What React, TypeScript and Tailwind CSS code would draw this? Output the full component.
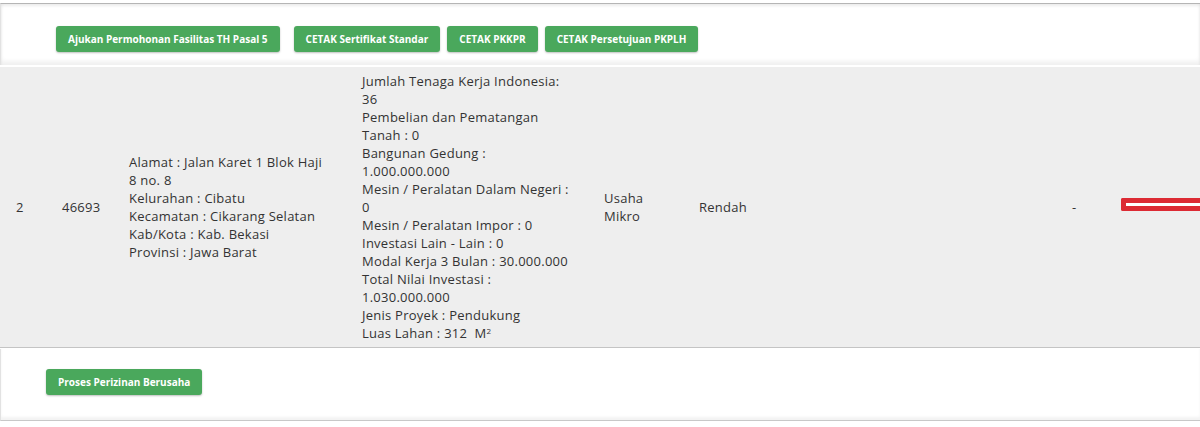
const btn =
  "h-[26px] px-[12px] rounded-[3px] bg-[#4aa85c] text-white text-[10px] font-bold whitespace-nowrap shadow-[0_1px_2px_rgba(0,0,0,0.25)] font-['Open_Sans',sans-serif]"

const address = [
  'Alamat : Jalan Karet 1 Blok Haji',
  '8 no. 8',
  'Kelurahan : Cibatu',
  'Kecamatan : Cikarang Selatan',
  'Kab/Kota : Kab. Bekasi',
  'Provinsi : Jawa Barat',
]

const invest = [
  'Jumlah Tenaga Kerja Indonesia:',
  '36',
  'Pembelian dan Pematangan',
  'Tanah : 0',
  'Bangunan Gedung :',
  '1.000.000.000',
  'Mesin / Peralatan Dalam Negeri :',
  '0',
  'Mesin / Peralatan Impor : 0',
  'Investasi Lain - Lain : 0',
  'Modal Kerja 3 Bulan : 30.000.000',
  'Total Nilai Investasi :',
  '1.030.000.000',
  'Jenis Proyek : Pendukung',
]

export default function App() {
  return (
    <div className="w-[1200px] h-[427px] bg-white overflow-hidden font-['Open_Sans',sans-serif] text-[13px] tracking-[0.25px] text-[#333] pt-[3px]">
      {/* top actions */}
      <div className="h-[62px] border-t border-[#b5b5b5] border-l border-l-[#e2e2e2] shadow-[inset_0_2px_3px_rgba(0,0,0,0.08),inset_0_-4px_4px_rgba(0,0,0,0.06)] flex items-start pl-[55px] pt-[22px] tracking-normal">
        <button className={btn}>Ajukan Permohonan Fasilitas TH Pasal 5</button>
        <button className={btn + ' ml-[14px]'}>CETAK Sertifikat Standar</button>
        <button className={btn + ' ml-[7px]'}>CETAK PKKPR</button>
        <button className={btn + ' ml-[7px]'}>CETAK Persetujuan PKPLH</button>
      </div>

      {/* data row */}
      <div className="mt-[2px] h-[281px] bg-[#eeeeee] border-b border-[#c4c4c4] flex items-center leading-[18px]">
        <div className="w-[62px] pl-[16px]">2</div>
        <div className="w-[67px]">46693</div>
        <div className="w-[233px]">
          {address.map((l) => (
            <div key={l} className="whitespace-nowrap">{l}</div>
          ))}
        </div>
        <div className="w-[242px]">
          {invest.map((l, i) => (
            <div key={i} className="whitespace-nowrap">{l}</div>
          ))}
          <div className="whitespace-nowrap">
            Luas Lahan : 312&nbsp; M<sup className="text-[8px]">2</sup>
          </div>
        </div>
        <div className="w-[95px]">
          <div>Usaha</div>
          <div>Mikro</div>
        </div>
        <div className="w-[373px]">Rendah</div>
        <div className="w-[49px]">-</div>
        <div className="flex-1 h-[13px] bg-white border-[5px] border-r-0 border-[#dc2a33] rounded-l-[2px] mt-[-6px]" />
      </div>

      {/* bottom actions */}
      <div className="mt-[1px] h-[72px] border-b border-[#c8c8c8] border-l border-l-[#e2e2e2] shadow-[inset_0_-3px_3px_rgba(0,0,0,0.05)] flex items-start pl-[45px] pt-[20px] tracking-normal">
        <button className={btn}>Proses Perizinan Berusaha</button>
      </div>
    </div>
  )
}
